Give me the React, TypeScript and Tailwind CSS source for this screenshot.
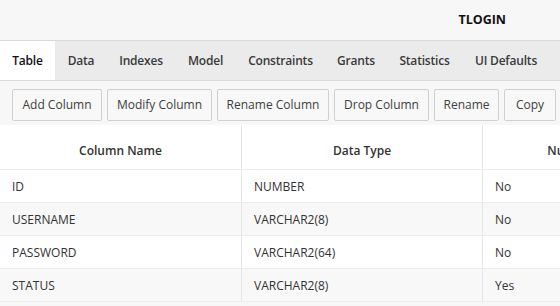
import React from "react";

const tabs: [string, string][] = [
  ["Table", "w-[55px]"],
  ["Data", "w-[52px]"],
  ["Indexes", "w-[68px]"],
  ["Model", "w-[61px]"],
  ["Constraints", "w-[89px]"],
  ["Grants", "w-[62px]"],
  ["Statistics", "w-[75px]"],
  ["UI Defaults", "w-[88px]"],
];
const buttons: [string, string][] = [
  ["Add Column", "w-[90px]"],
  ["Modify Column", "w-[105px]"],
  ["Rename Column", "w-[112px]"],
  ["Drop Column", "w-[95px]"],
  ["Rename", "w-[65px]"],
  ["Copy", "w-[52px]"],
];
const rows = [
  ["ID", "NUMBER", "No"],
  ["USERNAME", "VARCHAR2(8)", "No"],
  ["PASSWORD", "VARCHAR2(64)", "No"],
  ["STATUS", "VARCHAR2(8)", "Yes"],
];

export default function App() {
  return (
    <div
      className="w-[560px] h-[306px] overflow-hidden bg-[#f7f7f7] text-[#333333] text-[12px]"
      style={{ fontFamily: '"Open Sans", "Noto Sans", sans-serif' }}
    >
      <div className="h-[40px] flex items-center justify-end pr-[54px]">
        <span className="font-bold text-[12.5px] text-[#111]">TLOGIN</span>
      </div>
      <div className="h-[41px] flex border-y border-[#dadada] bg-[#ebebeb]">
        {tabs.map(([t, w], i) => (
          <div
            key={t}
            className={`${w} shrink-0 whitespace-nowrap flex items-center justify-center font-semibold text-[12px] tracking-[-0.2px] ${i === 0 ? "bg-white text-[#111]" : "text-[#3a3a3a]"}`}
          >
            {t}
          </div>
        ))}
      </div>
      <div className="flex gap-[5px] pl-[12px] pt-[8px] h-[44px]">
        {buttons.map(([b, w]) => (
          <div
            key={b}
            className={`${w} h-[32px] shrink-0 whitespace-nowrap flex items-center justify-center border border-[#d0d0d0] bg-[#f8f8f8] rounded-[2px] text-[#404040] text-[12px]`}
          >
            {b}
          </div>
        ))}
      </div>
      <div className="bg-white w-[660px]">
        <div className="grid grid-cols-[242px_241px_177px] h-[45px] border-b border-[#ececec] font-semibold text-[#333]">
          <div className="flex items-center justify-center pt-[8px] border-r border-[#e6e6e6]">Column Name</div>
          <div className="flex items-center justify-center pt-[8px] border-r border-[#e6e6e6]">Data Type</div>
          <div className="flex items-center justify-center pt-[8px]">Nullable</div>
        </div>
        {rows.map((r, i) => (
          <div
            key={r[0]}
            className={`grid grid-cols-[242px_241px_177px] h-[33px] border-b border-[#ececec] ${i % 2 === 1 ? "bg-[#f8f8f8]" : "bg-white"}`}
          >
            <div className="flex items-center pl-[12px] pt-[2px] border-r border-[#e6e6e6]">{r[0]}</div>
            <div className="flex items-center pl-[12px] pt-[2px] border-r border-[#e6e6e6]">{r[1]}</div>
            <div className="flex items-center pl-[12px] pt-[2px]">{r[2]}</div>
          </div>
        ))}
      </div>
    </div>
  );
}
